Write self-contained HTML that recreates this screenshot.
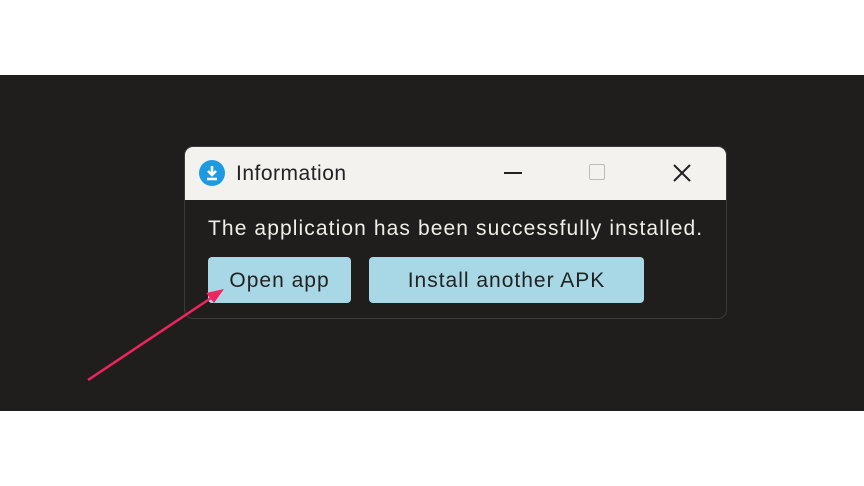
<!DOCTYPE html>
<html><head><style>
body{margin:0;width:864px;height:486px;background:#fff;position:relative;overflow:hidden;font-family:"Liberation Sans",sans-serif}
.dark{position:absolute;left:0;top:75px;width:864px;height:336px;background:#1f1e1d}
.win{position:absolute;left:184px;top:146px;width:541px;height:171px;border:1px solid #3a3a3a;border-radius:9px;background:#1f1e1d;overflow:hidden}
.tb{height:53px;background:#f4f2ef;position:relative}
.tt{position:absolute;left:51px;top:15px;font-size:21px;letter-spacing:0.5px;color:#222}
.msg{position:absolute;left:23px;top:70px;font-size:21px;letter-spacing:1.1px;color:#f0eee8;white-space:nowrap}
.btn{position:absolute;top:110px;height:46px;background:#a8d8e6;border-radius:4px;color:#222;font-size:21px;letter-spacing:1px;text-align:center;line-height:48px}
</style></head><body>
<div class="dark"></div>
<div class="win">
<div class="tb">
<svg style="position:absolute;left:13px;top:12px" width="28" height="28"><circle cx="14" cy="14" r="13" fill="#1e9be0"/><path d="M14 7v9M10 12l4 4 4-4M9 20h10" stroke="#fff" stroke-width="2.5" fill="none"/></svg>
<div class="tt">Information</div>
<div style="position:absolute;left:319px;top:25px;width:18px;height:2px;background:#222"></div>
<div style="position:absolute;left:404px;top:17px;width:14px;height:14px;border:1.5px solid #bbb;border-radius:2px"></div>
<svg style="position:absolute;left:488px;top:17px" width="18" height="18"><path d="M1 1L17 17M17 1L1 17" stroke="#222" stroke-width="2"/></svg>
</div>
<div class="msg">The application has been successfully installed.</div>
<div class="btn" style="left:23px;width:143px">Open app</div>
<div class="btn" style="left:184px;width:275px">Install another APK</div>
</div>
<svg style="position:absolute;left:0;top:0" width="864" height="486"><path d="M88 380L214 296" stroke="#f0245e" stroke-width="2.5"/><path d="M224 289L206 293L214 303Z" fill="#f0245e"/></svg>
</body></html>
